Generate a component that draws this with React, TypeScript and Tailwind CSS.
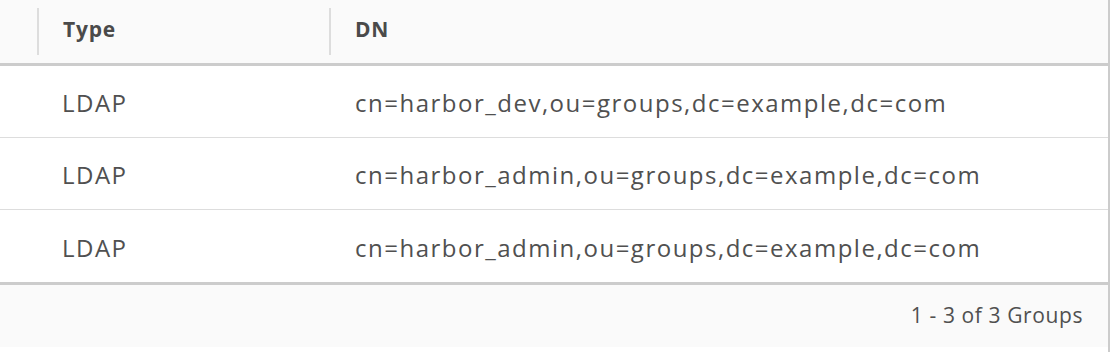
const rows = [
  { type: "LDAP", dn: "cn=harbor_dev,ou=groups,dc=example,dc=com" },
  { type: "LDAP", dn: "cn=harbor_admin,ou=groups,dc=example,dc=com" },
  { type: "LDAP", dn: "cn=harbor_admin,ou=groups,dc=example,dc=com" },
]

export default function App() {
  return (
    <div
      className="w-[1110px] h-[352px] bg-white text-[#505050] border-r-2 border-[#cccccc]"
      style={{ fontFamily: "'Open Sans', Lato, sans-serif" }}
    >
      <div className="grid grid-cols-[37px_292px_1fr] h-[66px] bg-[#fafafa] border-b-[3px] border-[#cccccc]">
        <div />
        <div className="flex items-center pb-1 pl-[24px] border-l-2 border-[#dddddd] my-[8px] text-[21px] font-bold text-[#4a4a4a] tracking-[0.8px]">
          Type
        </div>
        <div className="flex items-center pb-1 pl-[24px] border-l-2 border-[#dddddd] my-[8px] text-[21px] font-bold text-[#4a4a4a] tracking-[0.8px]">
          DN
        </div>
      </div>
      {rows.map((r, i) => (
        <div
          key={i}
          className={
            "grid grid-cols-[37px_292px_1fr] h-[72px] pt-[3px] items-center text-[24px] tracking-[1.5px] " +
            (i < rows.length - 1 ? "border-b border-[#dddddd]" : "")
          }
        >
          <div />
          <div className="pl-[25px]">{r.type}</div>
          <div className="pl-[26px]">{r.dn}</div>
        </div>
      ))}
      <div className="h-[65px] bg-[#fafafa] border-t-[3px] border-[#cccccc] flex items-center justify-end pr-[25px] text-[21px] tracking-[0.6px]">
        1 - 3 of 3 Groups
      </div>
    </div>
  )
}
